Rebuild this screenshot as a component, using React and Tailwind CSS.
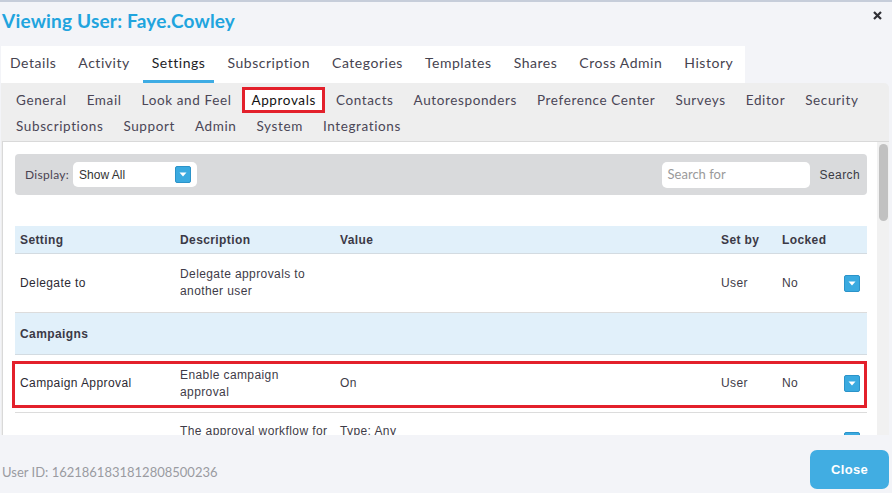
import React from "react";

const lato = { fontFamily: "Lato, 'Open Sans', sans-serif" };
const arial = { fontFamily: "'Liberation Sans', Arial, sans-serif" };

function DropBtn({ className = "" }) {
  return (
    <div className={"w-[16px] h-[17px] rounded-[2px] border border-[#2b93c9] bg-[#3aaae0] flex items-center justify-center " + className}>
      <svg width="8" height="5" viewBox="0 0 8 5"><path d="M0.5 0.5 L7.5 0.5 L4 4.5 Z" fill="#fff" /></svg>
    </div>
  );
}

const mainTabs = ["Details", "Activity", "Settings", "Subscription", "Categories", "Templates", "Shares", "Cross Admin", "History"];
const subTabs = ["General", "Email", "Look and Feel", "Approvals", "Contacts", "Autoresponders", "Preference Center", "Surveys", "Editor", "Security", "Subscriptions", "Support", "Admin", "System", "Integrations"];

const cols = "grid grid-cols-[160px_160px_1fr_61px_60px_30px]";

export default function App() {
  return (
    <div className="w-[892px] h-[493px] bg-[#f3f4f8] border-t-2 border-[#c6cdda] flex flex-col overflow-hidden" style={lato}>
      {/* Header */}
      <div className="h-[44px] flex justify-between items-start pl-[2px] pr-[10px]">
        <div className="pt-[7px] text-[19px] leading-[24px] font-bold tracking-[0.2px] text-[#21a4de] whitespace-nowrap">Viewing User: Faye.Cowley</div>
        <svg className="mt-[9px]" width="9" height="9" viewBox="0 0 9 9"><path d="M1 1 L8 8 M8 1 L1 8" stroke="#2f2f35" strokeWidth="2.2" /></svg>
      </div>

      {/* Main tabs */}
      <div className="ml-[1px] w-[744px] h-[37px] bg-white flex gap-[4px]">
        {mainTabs.map((t) => (
          <div
            key={t}
            className={
              "h-[37px] px-[9px] pb-[1px] flex items-center whitespace-nowrap text-[14px] tracking-[0.53px] border-b-[3px] " +
              (t === "Settings" ? "border-[#3eace4] text-[#222226]" : "border-transparent text-[#46434f]")
            }
          >
            {t}
          </div>
        ))}
      </div>

      {/* Sub area */}
      <div className="ml-[1px] w-[888px] bg-[#eeeeee] rounded-tr-[5px] pt-[4px] flex flex-col">
        <div className="flex flex-wrap gap-x-[2px] pl-[6px] pr-[10px]">
          {subTabs.map((t) => (
            <div
              key={t}
              className={
                "h-[26px] px-[6px] flex items-center whitespace-nowrap text-[13.5px] tracking-[0.62px] border-[3px] " +
                (t === "Approvals" ? "border-[#e3202b] bg-white text-[#111]" : "border-transparent text-[#4a4656]")
              }
            >
              {t}
            </div>
          ))}
        </div>

        {/* Panel */}
        <div className="mt-[2px] ml-[1px] h-[294px] bg-white border-l border-t border-[#d9d9d9] flex">
          <div className="flex-1 pl-[12px] pr-[10px] pt-[12px] overflow-hidden flex flex-col">
            {/* Filter bar */}
            <div className="h-[41px] shrink-0 bg-[#d9dadc] rounded-[4px] flex items-center pl-[10px] pr-[7px]">
              <span className="text-[12px] text-[#4a4352] tracking-[0.3px]">Display:</span>
              <div className="ml-[4px] w-[124px] h-[25px] bg-white rounded-[5px] flex items-center pl-[6px] pr-[6px] justify-between">
                <span className="text-[12px] text-[#333]" style={arial}>Show All</span>
                <DropBtn />
              </div>
              <div className="flex-1" />
              <div className="w-[148px] h-[26px] bg-white rounded-[5px] flex items-center pl-[6px] text-[13px] text-[#9a9a9a]">Search for</div>
              <span className="ml-[10px] text-[12px] text-[#3a3a44] tracking-[0.4px]" style={arial}>Search</span>
            </div>

            {/* Table */}
            <div className="mt-[31px] text-[12px] tracking-[0.4px] text-[#2c2a33]" style={arial}>
              <div className={cols + " h-[28px] items-center bg-[#e1f0fa] border-b border-[#d3dbe1] font-bold text-[#3b3946]"}>
                <div className="pl-[5px]">Setting</div>
                <div className="pl-[5px]">Description</div>
                <div className="pl-[5px]">Value</div>
                <div className="pl-[5px]">Set by</div>
                <div className="pl-[5px]">Locked</div>
                <div />
              </div>
              <div className={cols + " h-[59px] items-center border-b border-[#dcdcdc] leading-[17px]"}>
                <div className="pl-[5px]">Delegate to</div>
                <div className="pl-[5px] text-[#3e3b48]">Delegate approvals to<br />another user</div>
                <div className="pl-[5px]"></div>
                <div className="pl-[5px] text-[#3e3b48]">User</div>
                <div className="pl-[5px] text-[#3e3b48]">No</div>
                <div className="pl-[7px]"><DropBtn /></div>
              </div>
              <div className="h-[42px] flex items-center bg-[#e1f0fa] border-b border-[#d3dbe1] pl-[5px] font-bold text-[#3b3946]">Campaigns</div>
              <div className={cols + " relative h-[58px] items-center border-b border-[#dcdcdc] leading-[17px]"}>
                <div className="absolute left-[-3px] right-0 top-[6px] bottom-[4px] border-[3px] border-[#e3202b]" />
                <div className="pl-[5px]">Campaign Approval</div>
                <div className="pl-[5px] text-[#3e3b48]">Enable campaign<br />approval</div>
                <div className="pl-[5px] text-[#3e3b48]">On</div>
                <div className="pl-[5px] text-[#3e3b48]">User</div>
                <div className="pl-[5px] text-[#3e3b48]">No</div>
                <div className="pl-[7px]"><DropBtn /></div>
              </div>
              <div className={cols + " items-center py-[10px] leading-[17px]"}>
                <div className="pl-[5px]"></div>
                <div className="pl-[5px] text-[#3e3b48]">The approval workflow for<br />campaigns</div>
                <div className="pl-[5px] text-[#3e3b48] self-start">Type: Any<br />Approvers: Any</div>
                <div className="pl-[5px] text-[#3e3b48]">User</div>
                <div className="pl-[5px] text-[#3e3b48]">No</div>
                <div className="pl-[7px]"><DropBtn /></div>
              </div>
            </div>
          </div>
          {/* Scrollbar */}
          <div className="w-[12px] bg-[#f1f1f1] pt-[2px] flex justify-center">
            <div className="w-[9px] h-[77px] rounded-[5px] bg-[#c1c1c1]" />
          </div>
        </div>
      </div>

      {/* Footer */}
      <div className="flex-1 flex justify-between items-start pl-[2px] pr-[3px]">
        <div className="mt-[27px] text-[13px] leading-[20px] text-[#9a9ba1]">User ID: 1621861831812808500236</div>
        <div className="mt-[15px] w-[79px] h-[39px] rounded-[7px] bg-[#41ade2] flex items-center justify-center text-white font-bold text-[13px] tracking-[0.3px]" style={arial}>Close</div>
      </div>
    </div>
  );
}
